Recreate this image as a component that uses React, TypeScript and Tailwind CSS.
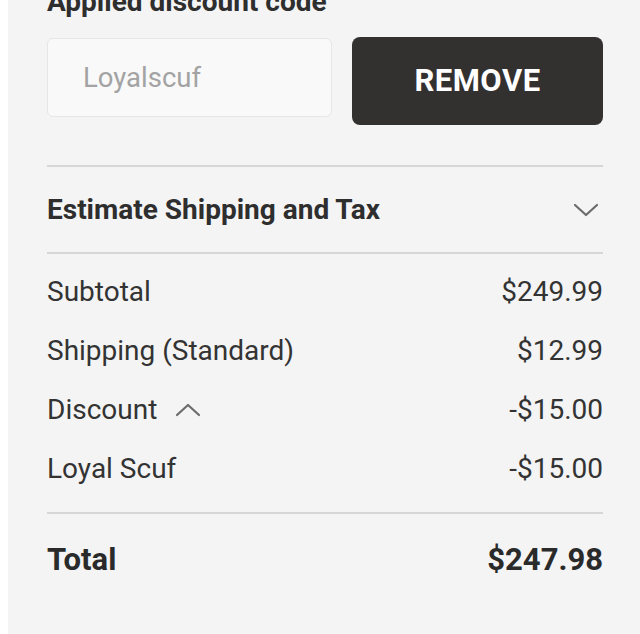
import React from "react";

function ChevronDown() {
  return (
    <svg width="26" height="16" viewBox="0 0 26 16" fill="none">
      <path d="M2 3 L13 13 L24 3" stroke="#6b6b6b" strokeWidth="2.2" strokeLinecap="round" strokeLinejoin="round" />
    </svg>
  );
}
function ChevronUp() {
  return (
    <svg width="26" height="16" viewBox="0 0 26 16" fill="none">
      <path d="M2 13 L13 3 L24 13" stroke="#6b6b6b" strokeWidth="2.2" strokeLinecap="round" strokeLinejoin="round" />
    </svg>
  );
}

export default function App() {
  return (
    <div className="w-[640px] h-[634px] bg-white overflow-hidden flex" style={{ fontFamily: "Roboto, 'Liberation Sans', sans-serif" }}>
      <div className="ml-[8px] flex-1 bg-[#f4f4f4] pl-[39px] pr-[37px] text-[#333333]">
        <div className="mt-[-13px] text-[28px] font-bold leading-[30px] text-[#2e2e2e]">Applied discount code</div>
        <div className="mt-[20px] flex items-start gap-[20px]">
          <div className="w-[285px] h-[79px] mt-[1px] rounded-[6px] border border-[#e6e6e6] bg-[#f9f9f9] flex items-center pl-[35px] text-[27.5px] text-[#a3a3a3]">
            Loyalscuf
          </div>
          <button className="flex-1 h-[88px] rounded-[8px] bg-[#333030] text-white text-[31px] font-bold tracking-[0.5px] flex items-center justify-center">
            REMOVE
          </button>
        </div>
        <div className="mt-[40px] h-[2px] bg-[#d6d6d6]" />
        <div className="h-[85px] flex items-center justify-between">
          <span className="text-[28px] font-bold text-[#2e2e2e]">Estimate Shipping and Tax</span>
          <span className="mr-[4px]"><ChevronDown /></span>
        </div>
        <div className="h-[2px] bg-[#d6d6d6]" />
        <div className="pt-[8px] text-[28px]">
          <div className="h-[59px] flex items-center justify-between"><span>Subtotal</span><span>$249.99</span></div>
          <div className="h-[59px] flex items-center justify-between"><span>Shipping (Standard)</span><span>$12.99</span></div>
          <div className="h-[59px] flex items-center justify-between"><span className="flex items-center gap-[18px]">Discount <ChevronUp /></span><span>-$15.00</span></div>
          <div className="h-[59px] flex items-center justify-between"><span>Loyal Scuf</span><span>-$15.00</span></div>
        </div>
        <div className="mt-[14px] h-[2px] bg-[#d6d6d6]" />
        <div className="h-[92px] flex items-center justify-between text-[31px] font-bold text-[#2a2a2a]">
          <span>Total</span><span>$247.98</span>
        </div>
      </div>
    </div>
  );
}
